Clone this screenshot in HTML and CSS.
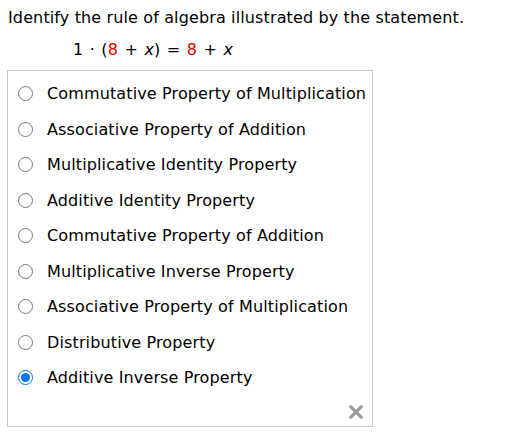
FILE: index.html
```html
<!DOCTYPE html>
<html>
<head>
<meta charset="utf-8">
<link rel="stylesheet" href="styles.css">
</head>
<body>
<div class="question">Identify the rule of algebra illustrated by the statement.</div>
<div class="equation">1 · (<span class="red">8</span> + <i>x</i>) = <span class="red">8</span> + <i>x</i></div>
<div class="box">
  <label class="opt"><input type="radio" name="a"><span>Commutative Property of Multiplication</span></label>
  <label class="opt"><input type="radio" name="a"><span>Associative Property of Addition</span></label>
  <label class="opt"><input type="radio" name="a"><span>Multiplicative Identity Property</span></label>
  <label class="opt"><input type="radio" name="a"><span>Additive Identity Property</span></label>
  <label class="opt"><input type="radio" name="a"><span>Commutative Property of Addition</span></label>
  <label class="opt"><input type="radio" name="a"><span>Multiplicative Inverse Property</span></label>
  <label class="opt"><input type="radio" name="a"><span>Associative Property of Multiplication</span></label>
  <label class="opt"><input type="radio" name="a"><span>Distributive Property</span></label>
  <label class="opt"><input type="radio" name="a" checked><span>Additive Inverse Property</span></label>
  <div class="footer">
    <svg class="close" width="14" height="14" viewBox="0 0 14 14"><path d="M2 2 L12 12 M12 2 L2 12" stroke="#9a9a9a" stroke-width="3.2" stroke-linecap="square"/></svg>
  </div>
</div>
</body>
</html>
```
FILE: styles.css
```css
body {
  margin: 0;
  padding: 7px 8px;
  font-family: "DejaVu Sans", Verdana, sans-serif;
  font-size: 16px;
  letter-spacing: 0.13px;
  color: #000;
  background: #fff;
}
.question {
  line-height: 22px;
}
.equation {
  margin-top: 10px;
  padding-left: 65px;
  line-height: 22px;
  word-spacing: 1.2px;
}
.red { color: #e00000; }
.box {
  margin-top: 9px;
  width: 364px;
  margin-left: -1px;
  border: 1px solid #c8c8c8;
  padding-top: 5px;
}
.opt {
  display: flex;
  align-items: center;
  height: 35.5px;
  padding-left: 10px;
}
.opt input {
  margin: 0 14px 0 0;
  width: 15px;
  height: 15px;
}
.footer {
  display: flex;
  justify-content: flex-end;
  padding: 9px 9px 7px 0;
}
```
